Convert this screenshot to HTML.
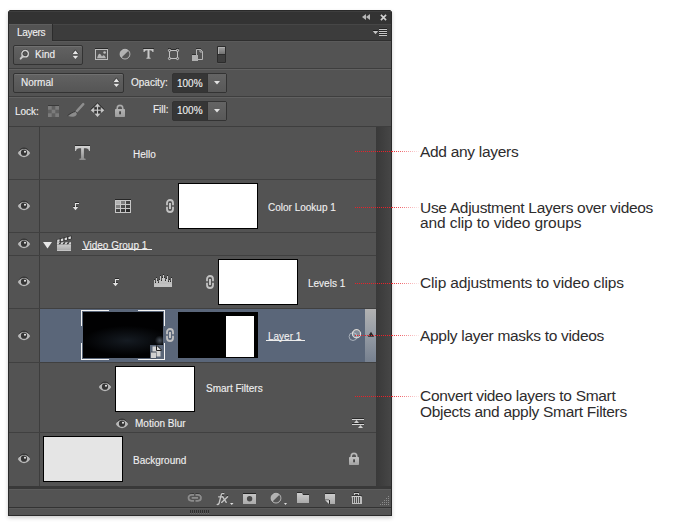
<!DOCTYPE html>
<html><head><meta charset="utf-8">
<style>
*{margin:0;padding:0;box-sizing:border-box}
html,body{width:674px;height:526px;background:#fff;overflow:hidden;position:relative;font-family:"Liberation Sans",sans-serif}
.a{position:absolute}
svg{position:absolute;overflow:visible}
.t{position:absolute;color:#f0f0f0;font-size:10px;line-height:12px;letter-spacing:0;white-space:nowrap;-webkit-text-stroke:0.12px #f0f0f0}
.note{position:absolute;color:#2e2c2d;font-size:15.5px;letter-spacing:-0.3px;white-space:nowrap;line-height:16px}
.dot{position:absolute;height:1px;background-image:linear-gradient(to right,#e8222a 50%,transparent 50%);background-size:2px 1px}
.sep{position:absolute;background:#404040}
.dd{position:absolute;border:1px solid #333;border-radius:2px;background:linear-gradient(#626262,#555);box-shadow:inset 0 1px 0 #707070}
.inp{position:absolute;border:1px solid #333;border-radius:2px;background:#363636}
.btn{position:absolute;background:linear-gradient(#646464,#585858);border-left:1px solid #333}
</style></head><body>
<!-- panel -->
<div class="a" style="left:9px;top:12px;width:382px;height:504px;background:#2a2a2a;box-shadow:0 1px 4px 1px rgba(0,0,0,.2)"></div>
<div class="a" style="left:8px;top:10px;width:384px;height:506px;background:#535353;border:1px solid #2a2a2a;clip-path:polygon(2px 0,calc(100% - 2px) 0,100% 2px,100% 100%,0 100%,0 2px)"></div>
<!-- title bar -->
<div class="a" style="left:9px;top:11px;width:382px;height:13px;background:#333;clip-path:polygon(1px 0,calc(100% - 1px) 0,100% 1px,100% 100%,0 100%,0 1px)"></div>
<svg style="left:362px;top:14px" width="10" height="7"><polygon points="4,0 0,3 4,6" fill="#b8b8b8"/><polygon points="8,0 4,3 8,6" fill="#b8b8b8"/></svg>
<svg style="left:380px;top:14px" width="7" height="7"><path d="M0.9,0.9 L6.1,6.1 M6.1,0.9 L0.9,6.1" stroke="#d2d2d2" stroke-width="1.6"/></svg>
<!-- tab row -->
<div class="a" style="left:52px;top:24px;width:339px;height:17px;background:#3c3c3c;border-left:1px solid #2c2c2c;border-bottom:1px solid #2e2e2e"></div>
<div class="a" style="left:52px;top:41px;width:339px;height:1px;background:#5a5a5a"></div>
<div class="a" style="left:53px;top:24px;width:338px;height:1px;background:#464646"></div>
<div class="a" style="left:10px;top:11px;width:380px;height:1px;background:#3e3e3e"></div>
<div class="a" style="left:9px;top:24px;width:43px;height:1px;background:#5e5e5e"></div>
<div class="t" style="left:17px;top:27px;letter-spacing:-0.3px">Layers</div>
<svg style="left:373px;top:28px" width="15" height="9"><polygon points="-0.2,3 5.2,3 2.5,6.2" fill="#c4c4c4"/><rect x="0" y="2" width="5" height="1" fill="#1e1e1e"/><g fill="#c4c4c4"><rect x="6" y="1" width="8" height="1"/><rect x="6" y="3" width="8" height="1"/><rect x="6" y="5" width="8" height="1"/><rect x="6" y="7" width="8" height="1"/></g><g fill="#242424"><rect x="6" y="0" width="8" height="1"/><rect x="6" y="2" width="8" height="1"/><rect x="6" y="4" width="8" height="1"/><rect x="6" y="6" width="8" height="1"/></g></svg>

<!-- filter row -->
<div class="dd" style="left:13px;top:45px;width:70px;height:20px"></div>
<svg style="left:19px;top:49px" width="12" height="12"><path d="M2.4,3.6 A4.1,4.1 0 0 1 9.8,2.6" fill="none" stroke="#343434" stroke-width="1"/><path d="M3,7.4 L0.8,9.6" stroke="#343434" stroke-width="1"/><circle cx="6.1" cy="4.7" r="3.2" fill="none" stroke="#d2d2d2" stroke-width="1.4"/><circle cx="6.1" cy="4.7" r="2" fill="#585858" stroke="#3e3e3e" stroke-width="0.7"/><path d="M3.8,7.2 L1.6,9.6" stroke="#cacaca" stroke-width="2" stroke-linecap="round"/></svg>
<div class="t" style="left:35px;top:49px;">Kind</div>
<svg style="left:72px;top:50px" width="8" height="10"><path d="M0.3,3.6 L3.4,-0.2 L6.5,3.6" fill="none" stroke="#333" stroke-width="0.8"/><polygon points="3.4,0.6 6.3,4.2 0.5,4.2" fill="#e6e6e6"/><rect x="0.6" y="4.6" width="5.6" height="1" fill="#2c2c2c"/><polygon points="0.6,5.8 6.2,5.8 3.4,9.1" fill="#e6e6e6"/></svg>
<!-- filter icons -->
<svg style="left:94px;top:48px" width="15" height="13"><rect x="1" y="0" width="13" height="1" fill="#2a2a2a"/><rect x="1.5" y="1.5" width="12" height="10" fill="none" stroke="#bcbcbc" stroke-width="1"/><path d="M3,10.2 Q4.5,5.5 5.6,5.8 Q6.6,6 8,8.4 Q9,7.2 9.8,7.3 Q10.8,7.5 12,10.2 Z" fill="#b4b4b4"/><circle cx="10.6" cy="4.5" r="1.3" fill="#bdbdbd"/></svg>
<svg style="left:119px;top:48px" width="12" height="12"><path d="M2.2,2.6 A5.4,5.4 0 0 1 9.8,2.6" fill="none" stroke="#2e2e2e" stroke-width="1"/><circle cx="6" cy="6.1" r="4.9" fill="#b2b2b2" stroke="#c4c4c4" stroke-width="0.9"/><path d="M9.2,2.9 A4.45,4.45 0 0 1 2.8,9.3 Z" fill="#555"/></svg>
<svg style="left:143px;top:48px" width="12" height="12"><rect x="0" y="0" width="11" height="1" fill="#2c2c2c"/><path d="M0.5,1 H10.5 V4 H9.6 Q9.3,2.2 7,2.2 H6.5 V9.2 Q6.5,9.8 7.6,9.8 V10.8 H3.4 V9.8 Q4.5,9.8 4.5,9.2 V2.2 H4 Q1.7,2.2 1.4,4 H0.5 Z" fill="#c8c8c8"/></svg>
<svg style="left:167px;top:48px" width="13" height="13"><g fill="#2c2c2c"><rect x="1" y="0" width="3" height="1"/><rect x="9" y="0" width="3" height="1"/><rect x="4" y="1" width="5" height="1"/></g><rect x="2.5" y="2.5" width="8" height="8" fill="none" stroke="#c0c0c0" stroke-width="1"/><g fill="#555" stroke="#c8c8c8" stroke-width="1"><circle cx="2.5" cy="2.5" r="1.1"/><circle cx="10.5" cy="2.5" r="1.1"/><circle cx="2.5" cy="10.5" r="1.1"/><circle cx="10.5" cy="10.5" r="1.1"/></g></svg>
<svg style="left:191px;top:48px" width="13" height="13"><path d="M5.5,1.5 H9.5 L11.5,3.5 V11.5 H5.5 Z" fill="none" stroke="#b5b5b5" stroke-width="1"/><path d="M9,1 V4 H12" fill="none" stroke="#b5b5b5" stroke-width="1"/><rect x="5" y="0" width="5" height="1" fill="#2f2f2f"/><rect x="1" y="7" width="6" height="6" fill="#b0b0b0"/><rect x="1" y="6" width="4" height="1" fill="#2f2f2f"/></svg>
<div class="a" style="left:217px;top:46px;width:9px;height:17px;background:#2c2c2c;border-radius:1px;box-shadow:0 1px 0 #5c5c5c"></div>
<div class="a" style="left:218px;top:47px;width:7px;height:7px;background:linear-gradient(#a0a0a0,#727272);box-shadow:inset 1px 1px 0 #b0b0b0"></div>
<div class="a" style="left:218px;top:55px;width:7px;height:7px;background:#3e3e3e"></div>
<div class="sep" style="left:9px;top:68px;width:382px;height:1px;background:#3e3e3e"></div>
<div class="a" style="left:9px;top:69px;width:382px;height:1px;background:#616161"></div>

<!-- blend row -->
<div class="dd" style="left:13px;top:73px;width:111px;height:20px"></div>
<div class="t" style="left:21px;top:77px;">Normal</div>
<svg style="left:113px;top:78px" width="8" height="10"><path d="M0.3,3.6 L3.4,-0.2 L6.5,3.6" fill="none" stroke="#333" stroke-width="0.8"/><polygon points="3.4,0.6 6.3,4.2 0.5,4.2" fill="#e6e6e6"/><rect x="0.6" y="4.6" width="5.6" height="1" fill="#2c2c2c"/><polygon points="0.6,5.8 6.2,5.8 3.4,9.1" fill="#e6e6e6"/></svg>
<div class="t" style="left:131px;top:77px;">Opacity:</div>
<div class="inp" style="left:172px;top:73px;width:55px;height:20px"></div>
<div class="btn" style="left:207px;top:74px;width:19px;height:18px"></div>
<svg style="left:214px;top:81px" width="7" height="4"><polygon points="0,0 6,0 3,3.5" fill="#e2e2e2"/></svg>
<div class="t" style="left:177px;top:78px;">100%</div>
<div class="sep" style="left:9px;top:96px;width:382px;height:1px;background:#3e3e3e"></div>
<div class="a" style="left:9px;top:97px;width:382px;height:1px;background:#616161"></div>

<!-- lock row -->
<div class="t" style="left:15px;top:106px;">Lock:</div>
<svg style="left:47px;top:105px" width="13" height="13"><rect x="1" y="0" width="11" height="1" fill="#3a3a3a"/><rect x="1" y="1" width="11" height="11" fill="#606060"/><g fill="#7c7c7c"><rect x="1" y="1" width="3.7" height="3.7"/><rect x="8.3" y="1" width="3.7" height="3.7"/><rect x="4.7" y="4.7" width="3.6" height="3.6"/><rect x="1" y="8.3" width="3.7" height="3.7"/><rect x="8.3" y="8.3" width="3.7" height="3.7"/></g></svg>
<svg style="left:67px;top:102px" width="18" height="16"><path d="M15.6,1.2 L8.6,8.6 M8.4,9.6 C5.5,10.2 2.5,12 0.6,13.6" fill="none" stroke="#383838" stroke-width="1"/><path d="M16.2,2.2 L9.8,9.2" stroke="#8e8e8e" stroke-width="2.6" stroke-linecap="round"/><path d="M8.8,10 C6,10.6 3.2,12.2 1.2,14 C3.8,15.2 7.2,15 8.7,13.8 C9.9,12.8 10,11.2 9.4,10.4 Z" fill="#8c8c8c"/><path d="M8.6,9.6 L10.4,11.2" stroke="#3c3c3c" stroke-width="0.7"/></svg>
<svg style="left:90px;top:103px" width="15" height="15"><path d="M0.6,6.4 L7.5,-0.2 L14.4,6.4" fill="none" stroke="#303030" stroke-width="0.9"/><g fill="#2c2c2c"><rect x="5" y="4.6" width="1.6" height="1.6"/><rect x="8.4" y="4.6" width="1.6" height="1.6"/><rect x="5" y="8.2" width="1.6" height="1.6"/><rect x="8.4" y="8.2" width="1.6" height="1.6"/></g><path d="M7.5,0.6 L4.7,3.7 H10.3 Z M7.5,13.9 L4.7,10.8 H10.3 Z M0.8,7.2 L3.9,4.4 V10 Z M14.2,7.2 L11.1,4.4 V10 Z" fill="#c8c8c8"/><rect x="7" y="3" width="1" height="8.5" fill="#c8c8c8"/><rect x="3" y="6.7" width="9" height="1" fill="#c8c8c8"/></svg>
<svg style="left:114px;top:103px" width="12" height="15"><defs><linearGradient id="lk2" x1="0" y1="0" x2="0" y2="1"><stop offset="0" stop-color="#b4b4b4"/><stop offset="1" stop-color="#9c9c9c"/></linearGradient></defs><path d="M2.6,4.6 A3.5,3.5 0 0 1 9.4,4.6" fill="none" stroke="#333" stroke-width="0.9"/><path d="M3.2,6.2 V5.2 A2.8,2.8 0 0 1 8.8,5.2 V6.2" fill="none" stroke="#acacac" stroke-width="1.6"/><rect x="1" y="6" width="10" height="8" rx="0.8" fill="url(#lk2)"/><rect x="5.3" y="8.3" width="1.5" height="3" fill="#2f2f2f"/></svg>
<div class="t" style="left:153px;top:104px;">Fill:</div>
<div class="inp" style="left:172px;top:101px;width:55px;height:20px"></div>
<div class="btn" style="left:207px;top:102px;width:19px;height:18px"></div>
<svg style="left:214px;top:109px" width="7" height="4"><polygon points="0,0 6,0 3,3.5" fill="#e2e2e2"/></svg>
<div class="t" style="left:177px;top:105px;">100%</div>
<div class="sep" style="left:9px;top:126px;width:382px;height:1px;background:#3e3e3e"></div>


<!-- layers list -->
<div class="a" style="left:376px;top:127px;width:15px;height:361px;background:linear-gradient(to right,#393939,#464646)"></div>
<div class="sep" style="left:39px;top:127px;width:1px;height:359px;background:#3d3d3d"></div>
<div class="sep" style="left:9px;top:179px;width:367px;height:1px"></div>
<div class="sep" style="left:9px;top:232px;width:367px;height:1px"></div>
<div class="sep" style="left:9px;top:255px;width:367px;height:1px"></div>
<div class="sep" style="left:9px;top:308px;width:367px;height:1px"></div>
<div class="a" style="left:40px;top:309px;width:336px;height:53px;background:#5a6679"></div>
<div class="sep" style="left:9px;top:362px;width:367px;height:1px"></div>
<div class="sep" style="left:9px;top:432px;width:367px;height:1px"></div>
<div class="a" style="left:9px;top:486px;width:382px;height:3px;background:#393939"></div>

<svg style="left:17px;top:147px" width="14" height="12"><path d="M1.3,5.2 C4,-0.3 10,-0.3 12.7,5.2" fill="none" stroke="#2c2c2c" stroke-width="1"/><path d="M0.8,6 C3.5,0.5 10.5,0.5 13.2,6 C10.5,11.5 3.5,11.5 0.8,6 Z" fill="#b8b8b8"/><circle cx="7" cy="5.7" r="3.1" fill="#353535"/><circle cx="8" cy="4.8" r="1.05" fill="#e6e6e6"/></svg>
<svg style="left:74px;top:145px" width="17" height="16"><defs><linearGradient id="tg" x1="0" y1="0" x2="0" y2="1"><stop offset="0" stop-color="#d4d4d4"/><stop offset="1" stop-color="#8c8c8c"/></linearGradient></defs><rect x="1" y="0" width="15" height="1" fill="#2c2c2c"/><path d="M1,1 H16 V6 H15 Q14.6,3.2 11.8,3.2 H9.9 V12.8 Q9.9,13.6 11.6,13.8 V15 H5.4 V13.8 Q7.1,13.6 7.1,12.8 V3.2 H5.2 Q2.4,3.2 2,6 H1 Z" fill="url(#tg)"/></svg>
<div class="t" style="left:133px;top:149px;">Hello</div>

<svg style="left:17px;top:200px" width="14" height="12"><path d="M1.3,5.2 C4,-0.3 10,-0.3 12.7,5.2" fill="none" stroke="#2c2c2c" stroke-width="1"/><path d="M0.8,6 C3.5,0.5 10.5,0.5 13.2,6 C10.5,11.5 3.5,11.5 0.8,6 Z" fill="#b8b8b8"/><circle cx="7" cy="5.7" r="3.1" fill="#353535"/><circle cx="8" cy="4.8" r="1.05" fill="#e6e6e6"/></svg>
<svg style="left:72px;top:202px" width="8" height="9"><rect x="3" y="0" width="4" height="1" fill="#2a2a2a"/><rect x="1" y="4" width="2" height="1" fill="#333"/><rect x="4" y="4" width="2" height="1" fill="#333"/><rect x="3" y="1" width="4" height="1" fill="#e4e4e4"/><rect x="3" y="1" width="1" height="6" fill="#e4e4e4"/><polygon points="0.8,5 6.2,5 3.5,8.2" fill="#e4e4e4"/></svg>
<svg style="left:114px;top:199px" width="18" height="15"><rect x="1" y="0" width="16" height="1" fill="#262626"/><rect x="1" y="1" width="16" height="13" fill="#c6c6c6"/><rect x="2" y="2" width="4" height="3" fill="#b2b2b2"/><rect x="7" y="2" width="4" height="3" fill="#7c7c7c"/><rect x="12" y="2" width="4" height="3" fill="#444"/><rect x="2" y="6" width="4" height="3" fill="#808080"/><rect x="7" y="6" width="4" height="3" fill="#4c4c4c"/><rect x="12" y="6" width="4" height="3" fill="#3e3e3e"/><rect x="2" y="10" width="4" height="3" fill="#424242"/><rect x="7" y="10" width="4" height="3" fill="#3a3a3a"/><rect x="12" y="10" width="4" height="3" fill="#2a2a2a"/></svg>
<svg style="left:165px;top:198px" width="10" height="16"><path d="M2,7.2 V5 A3,3 0 0 1 8,5 V7.2" fill="none" stroke="#c2c2c2" stroke-width="1.8"/><path d="M2,8.8 V11 A3,3 0 0 0 8,11 V8.8" fill="none" stroke="#c2c2c2" stroke-width="1.8"/><rect x="4" y="5" width="2" height="6" fill="#c2c2c2"/></svg>
<div class="a" style="left:178px;top:183px;width:80px;height:46px;background:#fff;border:1px solid #000"></div>
<div class="t" style="left:268px;top:202px;">Color Lookup 1</div>

<svg style="left:17px;top:238px" width="14" height="12"><path d="M1.3,5.2 C4,-0.3 10,-0.3 12.7,5.2" fill="none" stroke="#2c2c2c" stroke-width="1"/><path d="M0.8,6 C3.5,0.5 10.5,0.5 13.2,6 C10.5,11.5 3.5,11.5 0.8,6 Z" fill="#b8b8b8"/><circle cx="7" cy="5.7" r="3.1" fill="#353535"/><circle cx="8" cy="4.8" r="1.05" fill="#e6e6e6"/></svg>
<svg style="left:43px;top:242px" width="10" height="7"><polygon points="0,0 9,0 4.5,6.5" fill="#e8e8e8"/></svg>
<svg style="left:56px;top:235px" width="17" height="17"><defs><linearGradient id="cg" x1="0" y1="0" x2="0" y2="1"><stop offset="0" stop-color="#cacaca"/><stop offset="1" stop-color="#a6a6a6"/></linearGradient></defs><polygon points="0.6,4.4 15.4,0.6 15.6,4 0.8,7.6" fill="#262626"/><g fill="#dcdcdc"><polygon points="1.2,4.8 3.6,4.2 3.6,6.6 1.2,7.2"/><polygon points="4.8,3.9 7.3,3.3 7.3,5.7 4.8,6.3"/><polygon points="8.6,2.9 11.1,2.3 11.1,4.7 8.6,5.3"/><polygon points="12.4,1.9 14.9,1.3 14.9,3.7 12.4,4.3"/></g><rect x="1" y="7.2" width="14" height="2.3" fill="#d4d4d4"/><g fill="#262626"><polygon points="2.4,9.5 4,7.2 5.6,7.2 4,9.5"/><polygon points="6.4,9.5 8,7.2 9.6,7.2 8,9.5"/><polygon points="10.4,9.5 12,7.2 13.6,7.2 12,9.5"/></g><rect x="1" y="9.6" width="14" height="6.4" fill="url(#cg)"/><rect x="1" y="15" width="14" height="1" fill="#c4c4c4"/></svg>
<div class="t" style="left:83px;top:240px;">Video Group 1</div><div class="a" style="left:82px;top:249px;width:70px;height:1px;background:#ececec"></div>

<svg style="left:17px;top:276px" width="14" height="12"><path d="M1.3,5.2 C4,-0.3 10,-0.3 12.7,5.2" fill="none" stroke="#2c2c2c" stroke-width="1"/><path d="M0.8,6 C3.5,0.5 10.5,0.5 13.2,6 C10.5,11.5 3.5,11.5 0.8,6 Z" fill="#b8b8b8"/><circle cx="7" cy="5.7" r="3.1" fill="#353535"/><circle cx="8" cy="4.8" r="1.05" fill="#e6e6e6"/></svg>
<svg style="left:112px;top:278px" width="8" height="9"><rect x="3" y="0" width="4" height="1" fill="#2a2a2a"/><rect x="1" y="4" width="2" height="1" fill="#333"/><rect x="4" y="4" width="2" height="1" fill="#333"/><rect x="3" y="1" width="4" height="1" fill="#e4e4e4"/><rect x="3" y="1" width="1" height="6" fill="#e4e4e4"/><polygon points="0.8,5 6.2,5 3.5,8.2" fill="#e4e4e4"/></svg>
<svg style="left:153px;top:274px" width="21" height="14"><defs><linearGradient id="lg" x1="0" y1="0" x2="0" y2="13" gradientUnits="userSpaceOnUse"><stop offset="0" stop-color="#d2d2d2"/><stop offset="1" stop-color="#b4b4b4"/></linearGradient></defs><rect x="1" y="5" width="1" height="1" fill="#2a2a2a"/><rect x="1" y="6" width="1" height="7" fill="url(#lg)"/><rect x="2" y="8" width="1" height="1" fill="#2a2a2a"/><rect x="2" y="9" width="1" height="4" fill="url(#lg)"/><rect x="3" y="3" width="1" height="1" fill="#2a2a2a"/><rect x="3" y="4" width="1" height="9" fill="url(#lg)"/><rect x="4" y="6" width="1" height="1" fill="#2a2a2a"/><rect x="4" y="7" width="1" height="6" fill="url(#lg)"/><rect x="5" y="8" width="1" height="1" fill="#2a2a2a"/><rect x="5" y="9" width="1" height="4" fill="url(#lg)"/><rect x="6" y="5" width="1" height="1" fill="#2a2a2a"/><rect x="6" y="6" width="1" height="7" fill="url(#lg)"/><rect x="7" y="1" width="1" height="1" fill="#2a2a2a"/><rect x="7" y="2" width="1" height="11" fill="url(#lg)"/><rect x="8" y="6" width="1" height="1" fill="#2a2a2a"/><rect x="8" y="7" width="1" height="6" fill="url(#lg)"/><rect x="9" y="3" width="1" height="1" fill="#2a2a2a"/><rect x="9" y="4" width="1" height="9" fill="url(#lg)"/><rect x="10" y="0" width="1" height="1" fill="#2a2a2a"/><rect x="10" y="1" width="1" height="12" fill="url(#lg)"/><rect x="11" y="3" width="1" height="1" fill="#2a2a2a"/><rect x="11" y="4" width="1" height="9" fill="url(#lg)"/><rect x="12" y="6" width="1" height="1" fill="#2a2a2a"/><rect x="12" y="7" width="1" height="6" fill="url(#lg)"/><rect x="13" y="4" width="1" height="1" fill="#2a2a2a"/><rect x="13" y="5" width="1" height="8" fill="url(#lg)"/><rect x="14" y="1" width="1" height="1" fill="#2a2a2a"/><rect x="14" y="2" width="1" height="11" fill="url(#lg)"/><rect x="15" y="7" width="1" height="1" fill="#2a2a2a"/><rect x="15" y="8" width="1" height="5" fill="url(#lg)"/><rect x="16" y="5" width="1" height="1" fill="#2a2a2a"/><rect x="16" y="6" width="1" height="7" fill="url(#lg)"/><rect x="17" y="7" width="1" height="1" fill="#2a2a2a"/><rect x="17" y="8" width="1" height="5" fill="url(#lg)"/><rect x="18" y="3" width="1" height="1" fill="#2a2a2a"/><rect x="18" y="4" width="1" height="9" fill="url(#lg)"/><rect x="1" y="10" width="18" height="3" fill="#c2c2c2"/></svg>
<svg style="left:205px;top:274px" width="10" height="16"><path d="M2,7.2 V5 A3,3 0 0 1 8,5 V7.2" fill="none" stroke="#c2c2c2" stroke-width="1.8"/><path d="M2,8.8 V11 A3,3 0 0 0 8,11 V8.8" fill="none" stroke="#c2c2c2" stroke-width="1.8"/><rect x="4" y="5" width="2" height="6" fill="#c2c2c2"/></svg>
<div class="a" style="left:218px;top:259px;width:80px;height:46px;background:#fff;border:1px solid #000"></div>
<div class="t" style="left:308px;top:278px;">Levels 1</div>

<svg style="left:17px;top:330px" width="14" height="12"><path d="M1.3,5.2 C4,-0.3 10,-0.3 12.7,5.2" fill="none" stroke="#2c2c2c" stroke-width="1"/><path d="M0.8,6 C3.5,0.5 10.5,0.5 13.2,6 C10.5,11.5 3.5,11.5 0.8,6 Z" fill="#b8b8b8"/><circle cx="7" cy="5.7" r="3.1" fill="#353535"/><circle cx="8" cy="4.8" r="1.05" fill="#e6e6e6"/></svg>

<div class="a" style="left:83px;top:312px;width:80px;height:46px;background:radial-gradient(circle 5px at 96% 62%,#4a525c,rgba(0,0,0,0)),radial-gradient(ellipse 55% 32% at 55% 62%,#151b22,rgba(0,0,0,0)),#010102"></div>
<div class="a" style="left:81px;top:310px;width:28px;height:1px;background:#f4f4f4"></div>
<div class="a" style="left:81px;top:310px;width:1px;height:16px;background:#f4f4f4"></div>
<div class="a" style="left:138px;top:310px;width:27px;height:1px;background:#f4f4f4"></div>
<div class="a" style="left:164px;top:310px;width:1px;height:16px;background:#f4f4f4"></div>
<div class="a" style="left:81px;top:359px;width:28px;height:1px;background:#f4f4f4"></div>
<div class="a" style="left:81px;top:343px;width:1px;height:17px;background:#f4f4f4"></div>
<div class="a" style="left:138px;top:359px;width:27px;height:1px;background:#f4f4f4"></div>
<div class="a" style="left:164px;top:343px;width:1px;height:17px;background:#f4f4f4"></div>
<svg style="left:150px;top:345px" width="14" height="14"><rect width="14" height="14" fill="#5a6678"/><path d="M2.5,1.5 H7 L10.5,5 V11.5 H2.5 Z" fill="#d4d4d4"/><path d="M6.5,0.5 V5.5 H11.5" fill="none" stroke="#1e1e1e" stroke-width="1"/><polygon points="7,1 11,5 7,5" fill="#dcdcdc"/><path d="M7,0.5 L11.5,5" stroke="#2a2a2a" stroke-width="1"/><rect x="0.5" y="6.5" width="6" height="7" fill="#3e4654"/><rect x="1" y="7.5" width="5" height="5.5" fill="#cfcfcf"/></svg>
<svg style="left:165px;top:327px" width="10" height="16"><path d="M2,7.2 V5 A3,3 0 0 1 8,5 V7.2" fill="none" stroke="#c2c2c2" stroke-width="1.8"/><path d="M2,8.8 V11 A3,3 0 0 0 8,11 V8.8" fill="none" stroke="#c2c2c2" stroke-width="1.8"/><rect x="4" y="5" width="2" height="6" fill="#c2c2c2"/></svg>
<div class="a" style="left:178px;top:312px;width:80px;height:46px;background:#000"></div>
<div class="a" style="left:226px;top:316px;width:28px;height:41px;background:#fff"></div>
<div class="t" style="left:268px;top:331px;">Layer 1</div><div class="a" style="left:266px;top:340px;width:39px;height:1px;background:#ececec"></div>
<svg style="left:348px;top:328px" width="14" height="14"><circle cx="5" cy="8.6" r="3.9" fill="none" stroke="#a6aeb9" stroke-width="1"/><path d="M5,3 A5,5 0 0 1 12.5,3.6" fill="none" stroke="#262626" stroke-width="1.2"/><circle cx="8.5" cy="5.8" r="4.1" fill="rgba(230,230,230,.3)" stroke="#dcdcdc" stroke-width="1.2"/></svg>
<div class="a" style="left:365px;top:309px;width:11px;height:53px;background:linear-gradient(#b2b2b2,#9aa0a8 40%,#76808f)"></div>
<svg style="left:367px;top:331px" width="8" height="7"><polygon points="4,0.8 7.2,5.8 0.8,5.8" fill="#262626"/></svg>

<svg style="left:98px;top:381px" width="14" height="12"><path d="M1.3,5.2 C4,-0.3 10,-0.3 12.7,5.2" fill="none" stroke="#2c2c2c" stroke-width="1"/><path d="M0.8,6 C3.5,0.5 10.5,0.5 13.2,6 C10.5,11.5 3.5,11.5 0.8,6 Z" fill="#b8b8b8"/><circle cx="7" cy="5.7" r="3.1" fill="#353535"/><circle cx="8" cy="4.8" r="1.05" fill="#e6e6e6"/></svg>
<div class="a" style="left:115px;top:366px;width:80px;height:46px;background:#fff;border:1px solid #000"></div>
<div class="t" style="left:206px;top:383px;">Smart Filters</div>
<svg style="left:115px;top:418px" width="14" height="12"><path d="M1.3,5.2 C4,-0.3 10,-0.3 12.7,5.2" fill="none" stroke="#2c2c2c" stroke-width="1"/><path d="M0.8,6 C3.5,0.5 10.5,0.5 13.2,6 C10.5,11.5 3.5,11.5 0.8,6 Z" fill="#b8b8b8"/><circle cx="7" cy="5.7" r="3.1" fill="#353535"/><circle cx="8" cy="4.8" r="1.05" fill="#e6e6e6"/></svg>
<div class="t" style="left:135px;top:418px;">Motion Blur</div>
<svg style="left:352px;top:418px" width="13" height="11"><rect x="0" y="1" width="12" height="1" fill="#d4d4d4"/><rect x="0" y="0" width="12" height="1" fill="#2a2a2a"/><polygon points="2,5 7,5 4.5,2" fill="#d0d0d0"/><rect x="0" y="6" width="12" height="1" fill="#d4d4d4"/><rect x="0" y="5" width="12" height="1" fill="#2a2a2a"/><polygon points="6,10 11,10 8.5,7" fill="#d0d0d0"/></svg>

<svg style="left:17px;top:453px" width="14" height="12"><path d="M1.3,5.2 C4,-0.3 10,-0.3 12.7,5.2" fill="none" stroke="#2c2c2c" stroke-width="1"/><path d="M0.8,6 C3.5,0.5 10.5,0.5 13.2,6 C10.5,11.5 3.5,11.5 0.8,6 Z" fill="#b8b8b8"/><circle cx="7" cy="5.7" r="3.1" fill="#353535"/><circle cx="8" cy="4.8" r="1.05" fill="#e6e6e6"/></svg>
<div class="a" style="left:43px;top:436px;width:80px;height:46px;background:#e5e5e5;border:1px solid #000"></div>
<div class="t" style="left:133px;top:455px;">Background</div>
<svg style="left:348px;top:451px" width="12" height="15"><defs><linearGradient id="lk" x1="0" y1="0" x2="0" y2="1"><stop offset="0" stop-color="#c2c2c2"/><stop offset="1" stop-color="#a2a2a2"/></linearGradient></defs><path d="M2.6,4.6 A3.5,3.5 0 0 1 9.4,4.6" fill="none" stroke="#333" stroke-width="0.9"/><path d="M3.2,6.2 V5.2 A2.8,2.8 0 0 1 8.8,5.2 V6.2" fill="none" stroke="#b8b8b8" stroke-width="1.6"/><rect x="1" y="6" width="10" height="8" rx="0.8" fill="url(#lk)"/><rect x="5.3" y="8.3" width="1.5" height="3" fill="#2f2f2f"/></svg>

<!-- bottom bar -->
<div class="a" style="left:9px;top:489px;width:382px;height:1px;background:#5c5c5c"></div>
<svg style="left:187px;top:493px" width="16" height="10"><g fill="none" stroke="#353535" stroke-width="1"><path d="M7,0.6 H4.5 Q1.8,0.6 1.2,3"/><path d="M8.5,0.6 H11 Q13.7,0.6 14.3,3"/></g><g fill="none" stroke="#8c8c8c" stroke-width="1.7"><path d="M7,1.8 H4.5 A3,3 0 0 0 4.5,7.8 H7"/><path d="M8.5,1.8 H11 A3,3 0 0 1 11,7.8 H8.5"/></g><rect x="4.7" y="4" width="6.3" height="1.8" fill="#8c8c8c"/></svg>
<svg style="left:215px;top:491px" width="20" height="15"><g fill="none" stroke="#2a2a2a" stroke-width="1"><path d="M9,1.6 Q6.8,0.6 6,3.3"/><path d="M7.2,4.6 L8.6,4.6 M11.6,4.6 L13,4.6"/></g><g fill="none" stroke="#c6c6c6" stroke-width="1.35" stroke-linecap="round"><path d="M8.8,2.6 Q6.8,1.6 6.1,4.4 L4,12.6 Q3.5,13.8 2.2,13.4"/><path d="M3.6,5.8 H7.6"/><path d="M7.6,5.7 L11.2,11.4"/><path d="M12.6,5.7 L6.6,11.4"/></g><polygon points="15,12 18.5,12 16.75,14" fill="#e0e0e0"/></svg>
<svg style="left:242px;top:493px" width="15" height="12"><defs><linearGradient id="mg" x1="0" y1="0" x2="0" y2="1"><stop offset="0" stop-color="#c4c4c4"/><stop offset="1" stop-color="#acacac"/></linearGradient></defs><rect x="1" y="0" width="13" height="1" fill="#222"/><rect x="1" y="1" width="13" height="10" fill="url(#mg)"/><circle cx="7.6" cy="5.8" r="2.7" fill="#4a4a4a"/></svg>
<svg style="left:270px;top:492px" width="18" height="14"><path d="M2.2,2.6 A5.4,5.4 0 0 1 9.8,2.6" fill="none" stroke="#2e2e2e" stroke-width="1"/><circle cx="6" cy="6.1" r="4.9" fill="#b2b2b2" stroke="#c4c4c4" stroke-width="0.9"/><path d="M9.2,2.9 A4.45,4.45 0 0 1 2.8,9.3 Z" fill="#555"/><polygon points="14,11 17,11 15.5,13" fill="#e0e0e0"/></svg>
<svg style="left:296px;top:492px" width="14" height="12"><defs><linearGradient id="fg" x1="0" y1="0" x2="0" y2="1"><stop offset="0" stop-color="#cdcdcd"/><stop offset="1" stop-color="#a9a9a9"/></linearGradient></defs><rect x="1" y="0" width="5" height="1" fill="#2a2a2a"/><rect x="6" y="2" width="7" height="1" fill="#2a2a2a"/><path d="M1,1 H6 L7,3 H13 V11 H1 Z" fill="url(#fg)"/></svg>
<svg style="left:324px;top:493px" width="12" height="12"><defs><linearGradient id="ng" x1="0" y1="0" x2="0" y2="1"><stop offset="0" stop-color="#cbcbcb"/><stop offset="1" stop-color="#aaaaaa"/></linearGradient></defs><rect x="1" y="0" width="10" height="1" fill="#2a2a2a"/><path d="M1,1 H11 V11 H5.5 V7 H1 Z" fill="url(#ng)"/><polygon points="1,7 5,7 5,11" fill="#d4d4d4"/><rect x="5" y="7" width="1" height="4" fill="#2a2a2a"/><rect x="1" y="6.6" width="4" height="0.6" fill="#3a3a3a"/></svg>
<svg style="left:351px;top:492px" width="12" height="13"><rect x="3" y="0" width="5" height="1" fill="#2a2a2a"/><rect x="3" y="1" width="5" height="2" fill="#c4c4c4"/><rect x="4" y="2" width="3" height="1" fill="#3a3a3a"/><rect x="1" y="3" width="10" height="1" fill="#383838"/><path d="M0,5.2 L1,4 H10 L11,5.2 Z" fill="#cfcfcf"/><rect x="1" y="5" width="10" height="7" fill="#bdbdbd"/><g fill="#4e4e4e"><rect x="2" y="5" width="1" height="6"/><rect x="4" y="5" width="1" height="6"/><rect x="6" y="5" width="1" height="6"/><rect x="8" y="5" width="1" height="6"/></g></svg>
<svg style="left:379px;top:495px" width="11" height="11"><g fill="#8c8c8c"><rect x="9" y="1" width="1" height="1"/><rect x="7" y="3" width="1" height="1"/><rect x="9" y="3" width="1" height="1"/><rect x="5" y="5" width="1" height="1"/><rect x="7" y="5" width="1" height="1"/><rect x="9" y="5" width="1" height="1"/><rect x="3" y="7" width="1" height="1"/><rect x="5" y="7" width="1" height="1"/><rect x="7" y="7" width="1" height="1"/><rect x="9" y="7" width="1" height="1"/><rect x="1" y="9" width="1" height="1"/><rect x="3" y="9" width="1" height="1"/><rect x="5" y="9" width="1" height="1"/><rect x="7" y="9" width="1" height="1"/><rect x="9" y="9" width="1" height="1"/></g></svg>
<div class="a" style="left:9px;top:507px;width:382px;height:1px;background:#333"></div>
<div class="a" style="left:9px;top:508px;width:382px;height:1px;background:#5a5a5a"></div>
<div class="a" style="left:190px;top:510px;width:20px;height:3px;background-image:linear-gradient(to right,#2e2e2e 50%,transparent 50%);background-size:2px 3px"></div>
<div class="a" style="left:190px;top:513px;width:20px;height:1px;background-image:linear-gradient(to right,#6a6a6a 50%,transparent 50%);background-size:2px 1px"></div>

<!-- annotations -->
<div class="dot" style="left:355px;top:151px;width:37px"></div><div class="dot" style="left:392px;top:151px;width:28px;-webkit-mask-image:linear-gradient(to right,#000,rgba(0,0,0,.05))"></div>
<div class="note" style="left:420px;top:144px;letter-spacing:-0.3px">Add any layers</div>
<div class="dot" style="left:355px;top:207px;width:37px"></div><div class="dot" style="left:392px;top:207px;width:28px;-webkit-mask-image:linear-gradient(to right,#000,rgba(0,0,0,.05))"></div>
<div class="note" style="left:420px;top:200px;letter-spacing:-0.3px">Use Adjustment Layers over videos</div>
<div class="note" style="left:420px;top:215px;letter-spacing:-0.1px">and clip to video groups</div>
<div class="dot" style="left:355px;top:283px;width:37px"></div><div class="dot" style="left:392px;top:283px;width:28px;-webkit-mask-image:linear-gradient(to right,#000,rgba(0,0,0,.05))"></div>
<div class="note" style="left:420px;top:275px;letter-spacing:-0.15px">Clip adjustments to video clips</div>
<div class="dot" style="left:355px;top:335px;width:37px"></div><div class="dot" style="left:392px;top:335px;width:28px;-webkit-mask-image:linear-gradient(to right,#000,rgba(0,0,0,.05))"></div>
<div class="note" style="left:420px;top:328px;letter-spacing:-0.3px">Apply layer masks to videos</div>
<div class="dot" style="left:355px;top:396px;width:37px"></div><div class="dot" style="left:392px;top:396px;width:28px;-webkit-mask-image:linear-gradient(to right,#000,rgba(0,0,0,.05))"></div>
<div class="note" style="left:420px;top:388px;letter-spacing:-0.3px">Convert video layers to Smart</div>
<div class="note" style="left:420px;top:404px;letter-spacing:-0.3px">Objects and apply Smart Filters</div>
</body></html>
